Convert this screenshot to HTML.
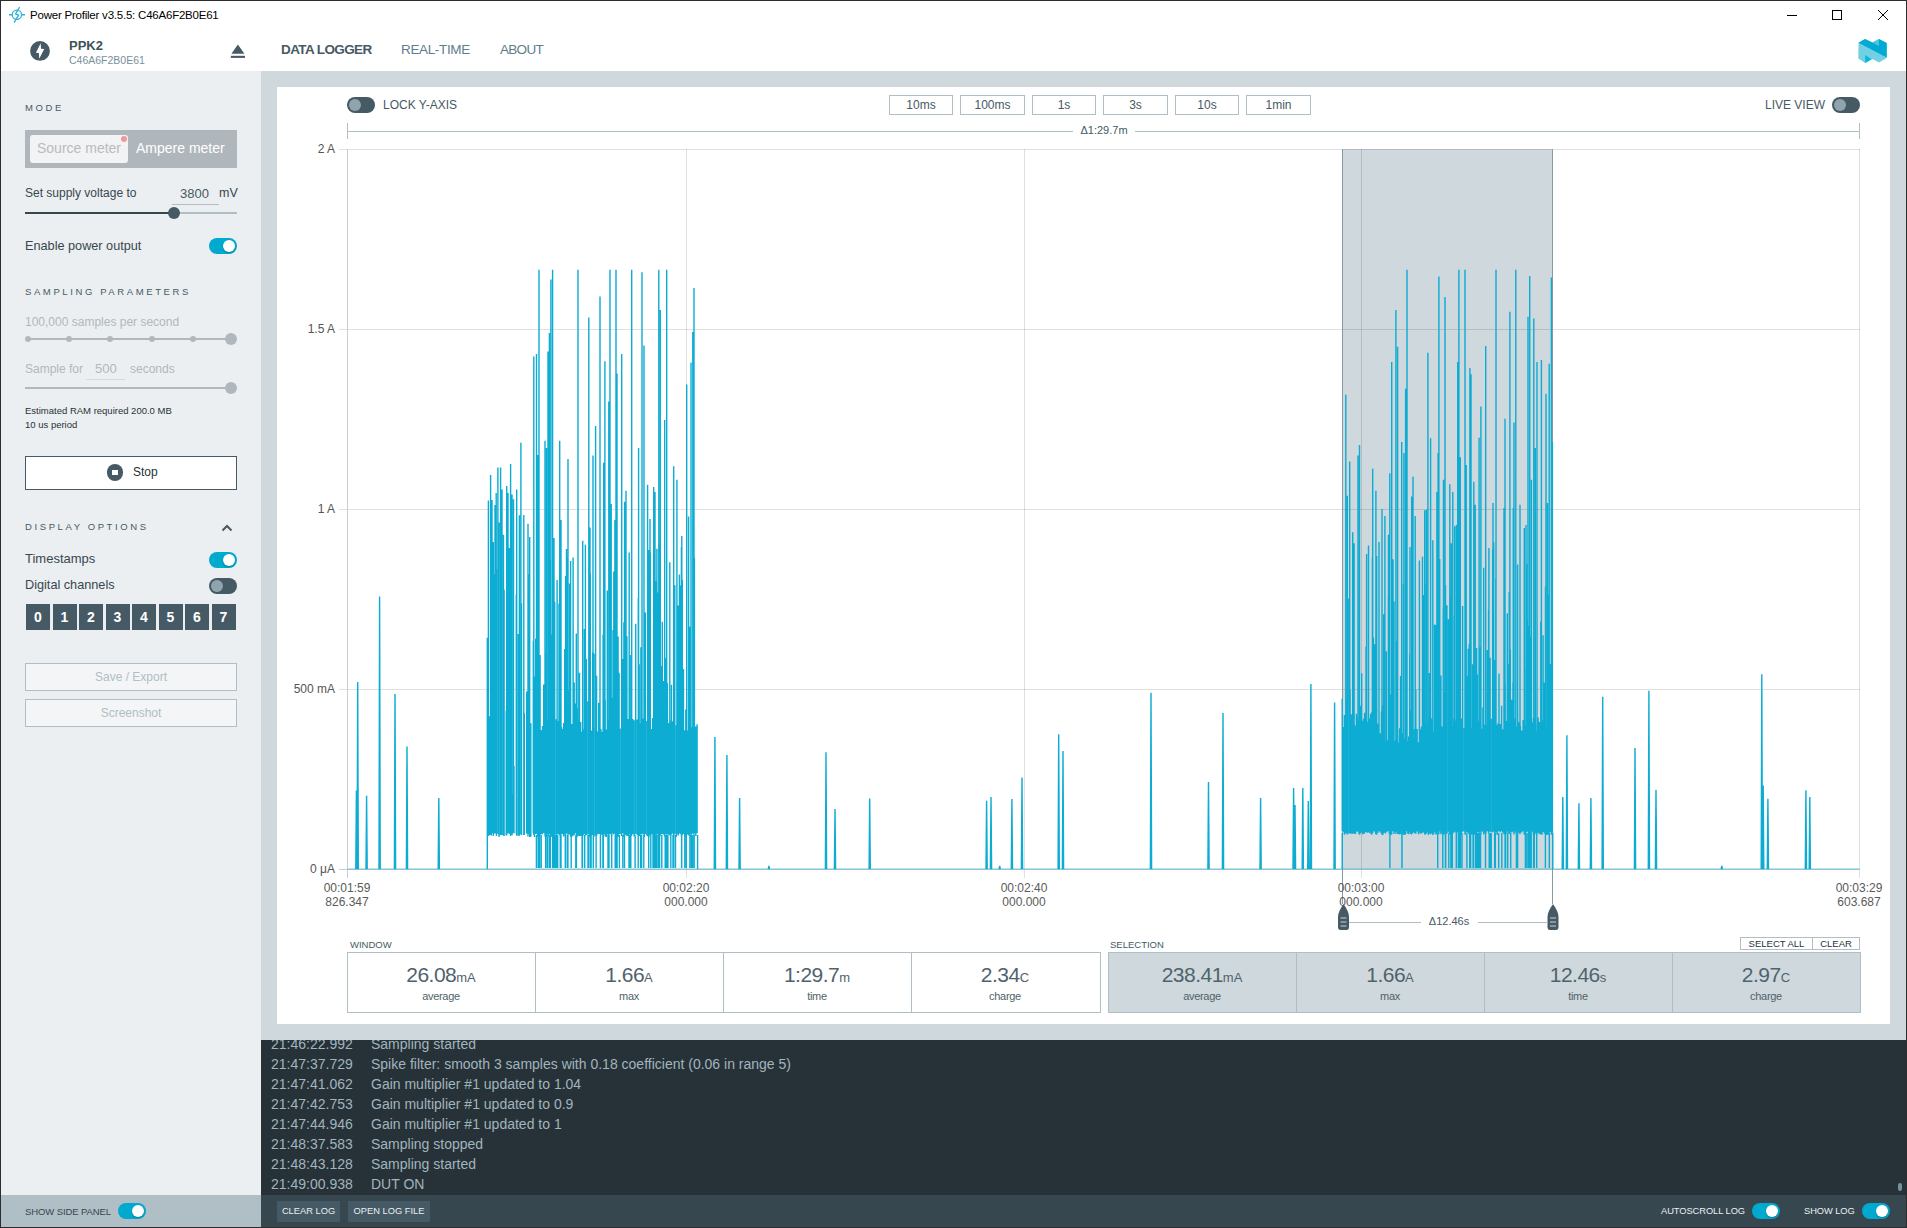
<!DOCTYPE html>
<html><head><meta charset="utf-8">
<style>
*{box-sizing:border-box;margin:0;padding:0}
html,body{width:1907px;height:1228px;overflow:hidden;background:#fff;font-family:"Liberation Sans",sans-serif}
.a{position:absolute}
.t{position:absolute;white-space:nowrap;line-height:1}
#win{position:absolute;left:0;top:0;width:1907px;height:1228px;background:#fff;overflow:hidden}
.bl{position:absolute;background:#2d2d2d}
.side{position:absolute;left:1px;top:71px;width:260px;height:1124px;background:#eceff1}
.main{position:absolute;left:261px;top:71px;width:1645px;height:969px;background:#cfd8dc}
.panel{position:absolute;left:277px;top:87px;width:1613px;height:937px;background:#fff}
.log{position:absolute;left:261px;top:1040px;width:1645px;height:155px;background:#263238;overflow:hidden}
.bbar1{position:absolute;left:1px;top:1195px;width:260px;height:32px;background:#b0bec5}
.bbar2{position:absolute;left:261px;top:1195px;width:1645px;height:32px;background:#37474f}
.hdr{color:#455a64;font-size:9.5px;letter-spacing:2.6px}
.lbl{color:#37474f;font-size:13px}
.tog{position:absolute;width:28px;height:16px;border-radius:8px}
.tog.on{background:#00a9ce}
.tog.off{background:#455a64}
.tog .k{position:absolute;top:2px;width:12px;height:12px;border-radius:6px}
.tog.on .k{right:2px;background:#fff;box-shadow:0 1px 1.5px rgba(0,0,0,0.25)}
.tog.off .k{left:2px;background:#90a4ae}
.ch{position:absolute;top:604px;width:24px;height:26px;background:#455a64;color:#fff;font-weight:bold;font-size:14px;text-align:center;line-height:26px}
.btn2{position:absolute;left:25px;width:212px;height:28px;border:1px solid #b0bec5;background:#f3f5f6;color:#b0bec5;font-size:12px;text-align:center;line-height:26px}
.tb{position:absolute;top:95px;height:20px;border:1px solid #b0bec5;color:#455a64;font-size:12px;text-align:center;line-height:18px}
.yl{position:absolute;right:1572px;color:#555;font-size:12px;line-height:1;white-space:nowrap}
.xl{position:absolute;width:80px;margin-left:-40px;text-align:center;color:#5a5a5a;font-size:12px;line-height:14px}
.cell{position:absolute;top:952px;width:188px;height:61px;text-align:center}
.cell .v{position:absolute;left:0;right:0;top:12px;font-size:21px;color:#4f636c;line-height:1;letter-spacing:-0.5px}
.cell .v small{font-size:13px;letter-spacing:0}
.cell .n{position:absolute;left:0;right:0;top:39px;font-size:11px;color:#4f636c;line-height:1;letter-spacing:-0.3px}
.logrow{position:absolute;left:10px;color:#a2b4bd;font-size:14px;line-height:1;white-space:nowrap}
.logrow span{position:absolute;left:100px}
.bb{position:absolute;top:1201px;height:21px;background:#455a64;color:#eceff1;font-size:9.3px;line-height:21px;text-align:center}
</style></head><body>
<div id="win">
<!-- title bar -->
<svg class="a" style="left:6px;top:4px" width="22" height="22" viewBox="0 0 22 22">
<circle cx="10.9" cy="10.75" r="4.66" fill="none" stroke="#2fb0d6" stroke-width="1.25"/>
<path d="M3 10.75H6.3M15.6 10.75H19" stroke="#2fb0d6" stroke-width="1.3" fill="none"/>
<path d="M13.6 3.05L9.5 9.8L12.6 11.2L8.1 18.6" stroke="#2fb0d6" stroke-width="1.3" fill="none" stroke-linejoin="round"/>
</svg>
<div class="t" style="left:30px;top:10px;font-size:11.5px;color:#000;letter-spacing:-0.22px">Power Profiler v3.5.5: C46A6F2B0E61</div>
<div class="a" style="left:1787px;top:15px;width:10px;height:1px;background:#000"></div>
<div class="a" style="left:1832px;top:10px;width:10px;height:10px;border:1px solid #000"></div>
<svg class="a" style="left:1877px;top:9px" width="12" height="12" viewBox="0 0 12 12"><path d="M1 1L11 11M11 1L1 11" stroke="#000" stroke-width="1"/></svg>

<!-- header -->
<svg class="a" style="left:28px;top:39px" width="24" height="24" viewBox="0 0 24 24">
<circle cx="12" cy="11.9" r="9.9" fill="#455a64"/>
<path d="M12.7 4.2L13 9.8L16.2 10L11.2 19.7L10.9 14.1L7.9 13.7Z" fill="#fff"/>
</svg>
<div class="t" style="left:69px;top:39px;font-size:13px;font-weight:bold;color:#40525b">PPK2</div>
<div class="t" style="left:69px;top:55px;font-size:10.5px;color:#78909c">C46A6F2B0E61</div>
<svg class="a" style="left:230px;top:43px" width="16" height="16" viewBox="0 0 16 16">
<path d="M7.9 1.4L14.4 10.8H1.4Z" fill="#455a64"/><rect x="0.8" y="12.8" width="14.2" height="2.1" fill="#455a64"/>
</svg>
<div class="t" style="left:281px;top:43px;font-size:13.5px;font-weight:bold;color:#455a64;letter-spacing:-0.6px">DATA LOGGER</div>
<div class="t" style="left:401px;top:43px;font-size:13.5px;color:#607d8b;letter-spacing:-0.35px">REAL-TIME</div>
<div class="t" style="left:500px;top:43px;font-size:13.5px;color:#607d8b;letter-spacing:-0.7px">ABOUT</div>
<svg class="a" style="left:1854px;top:36px" width="36" height="30" viewBox="0 0 36 30">
<path d="M4.5 6.8L11 3.05L18.4 6.5L25 3.05L32.7 7.1V22L25 26.6L18.4 23.1L11.2 26.9L4.3 22.5Z" fill="#72cfe4"/>
<path d="M25 3.05L24.9 10L18.4 6.5Z" fill="#4cc6df"/>
<path d="M4.5 6.8L11 3.05L18.4 6.5L24.9 10L25 3.05L32.7 7.1V21.5Z" fill="#00aad2"/>
<path d="M11.2 19.05L11.2 26.9L17.6 23.2Z" fill="#00bcd8"/>
</svg>

<!-- side -->
<div class="side"></div>
<div class="t hdr" style="left:25px;top:103px">MODE</div>
<div class="a" style="left:25px;top:130px;width:212px;height:38px;background:#b0b7bc"></div>
<div class="a" style="left:30px;top:135px;width:98px;height:28px;background:#f2f3f4;border-radius:3px"></div>
<div class="a" style="left:121px;top:136px;width:6px;height:6px;border-radius:3px;background:#ef9a9a"></div>
<div class="t" style="left:37px;top:141px;font-size:14px;color:#b7bcc0">Source meter</div>
<div class="t" style="left:136px;top:141px;font-size:14px;color:#fff">Ampere meter</div>
<div class="t lbl" style="left:25px;top:187px;font-size:12px">Set supply voltage to</div>
<div class="t lbl" style="left:180px;top:187px;font-size:13px;color:#455a64">3800</div>
<div class="a" style="left:172px;top:204px;width:47px;height:1px;background:#b0bec5"></div>
<div class="t lbl" style="left:219px;top:187px;font-size:12.5px">mV</div>
<div class="a" style="left:25px;top:212px;width:212px;height:2px;background:#b0bec5"></div>
<div class="a" style="left:25px;top:212px;width:149px;height:2px;background:#37474f"></div>
<div class="a" style="left:168px;top:207px;width:12px;height:12px;border-radius:6px;background:#455a64"></div>
<div class="t lbl" style="left:25px;top:240px;font-size:12.7px">Enable power output</div>
<div class="tog on" style="left:209px;top:238px"><div class="k"></div></div>

<div class="t hdr" style="left:25px;top:287px">SAMPLING PARAMETERS</div>
<div class="t" style="left:25px;top:316px;font-size:12px;color:#b0b8bd">100,000 samples per second</div>
<div class="a" style="left:28px;top:338px;width:203px;height:2px;background:#b0b8bd"></div>
<div class="a" style="left:25px;top:336px;width:6px;height:6px;border-radius:3px;background:#b0b8bd"></div>
<div class="a" style="left:66px;top:336px;width:6px;height:6px;border-radius:3px;background:#b0b8bd"></div>
<div class="a" style="left:107px;top:336px;width:6px;height:6px;border-radius:3px;background:#b0b8bd"></div>
<div class="a" style="left:149px;top:336px;width:6px;height:6px;border-radius:3px;background:#b0b8bd"></div>
<div class="a" style="left:190px;top:336px;width:6px;height:6px;border-radius:3px;background:#b0b8bd"></div>
<div class="a" style="left:225px;top:333px;width:12px;height:12px;border-radius:6px;background:#b0b8bd"></div>
<div class="t" style="left:25px;top:363px;font-size:12px;color:#b0b8bd">Sample for</div>
<div class="t" style="left:95px;top:362px;font-size:13px;color:#b0b8bd">500</div>
<div class="a" style="left:86px;top:379px;width:39px;height:1px;background:#d5dadd"></div>
<div class="t" style="left:130px;top:363px;font-size:12px;color:#b0b8bd">seconds</div>
<div class="a" style="left:25px;top:387px;width:206px;height:2px;background:#b0b8bd"></div>
<div class="a" style="left:225px;top:382px;width:12px;height:12px;border-radius:6px;background:#b0b8bd"></div>
<div class="t" style="left:25px;top:406px;font-size:9.5px;color:#263238">Estimated RAM required 200.0 MB</div>
<div class="t" style="left:25px;top:420px;font-size:9.5px;color:#263238">10 us period</div>
<div class="a" style="left:25px;top:456px;width:212px;height:34px;border:1px solid #455a64;background:#fff"></div>
<div class="a" style="left:106.5px;top:464px;width:16.5px;height:16.5px;border-radius:8.25px;background:#455a64"></div>
<div class="a" style="left:112px;top:470px;width:6px;height:5px;background:#fff"></div>
<div class="t" style="left:133px;top:466px;font-size:12px;color:#263238">Stop</div>

<div class="t hdr" style="left:25px;top:522px">DISPLAY OPTIONS</div>
<svg class="a" style="left:221px;top:523px" width="12" height="9" viewBox="0 0 12 9"><path d="M1.5 7.5L6 3L10.5 7.5" fill="none" stroke="#455a64" stroke-width="2"/></svg>
<div class="t lbl" style="left:25px;top:552px">Timestamps</div>
<div class="tog on" style="left:209px;top:552px"><div class="k"></div></div>
<div class="t lbl" style="left:25px;top:579px;font-size:12.7px">Digital channels</div>
<div class="tog off" style="left:209px;top:578px"><div class="k"></div></div>
<div class="ch" style="left:26px">0</div>
<div class="ch" style="left:52.5px">1</div>
<div class="ch" style="left:79px">2</div>
<div class="ch" style="left:105.5px">3</div>
<div class="ch" style="left:132px">4</div>
<div class="ch" style="left:158.5px">5</div>
<div class="ch" style="left:185px">6</div>
<div class="ch" style="left:211.5px">7</div>
<div class="btn2" style="top:663px">Save / Export</div>
<div class="btn2" style="top:699px">Screenshot</div>

<!-- main -->
<div class="main"></div>
<div class="panel"></div>
<svg class="a" style="left:0;top:0" width="1907" height="1228" viewBox="0 0 1907 1228">
<rect x="1342.5" y="149" width="210.5" height="720.5" fill="#cfd8dc"/>
<path d="M339 149.5 H1860" stroke="rgba(0,0,0,0.12)" stroke-width="1"/>
<path d="M339 329.5 H1860" stroke="rgba(0,0,0,0.12)" stroke-width="1"/>
<path d="M339 509.5 H1860" stroke="rgba(0,0,0,0.12)" stroke-width="1"/>
<path d="M339 689.5 H1860" stroke="rgba(0,0,0,0.12)" stroke-width="1"/>
<path d="M686.5 149 V878" stroke="rgba(0,0,0,0.12)" stroke-width="1"/>
<path d="M1024.5 149 V878" stroke="rgba(0,0,0,0.12)" stroke-width="1"/>
<path d="M1361.5 149 V878" stroke="rgba(0,0,0,0.12)" stroke-width="1"/>
<path d="M1859.5 149 V878" stroke="rgba(0,0,0,0.12)" stroke-width="1"/>
<path d="M339 869.5 H1860" stroke="#cccccc" stroke-width="1"/>
<path d="M347.5 149 V878" stroke="#cccccc" stroke-width="1"/>
<path d="M1342.5 149 V904 M1552.5 149 V904" stroke="#8a9aa2" stroke-width="1"/>
<g fill="none" stroke="#0cacd3" stroke-width="1.4" stroke-linejoin="miter">
<path d="M355.8 869 L356.4 790.6 L357 869 M357.1 869 L357.7 682 L358.3 869 M366 869 L366.6 795.8 L367.2 869 M379 869 L379.6 596.5 L380.2 869 M394.4 869 L395 694 L395.6 869 M406.4 869 L407 746.6 L407.6 869 M438.2 869 L438.8 798 L439.4 869 M714.3 869 L714.9 737 L715.5 869 M726.3 869 L726.9 755 L727.5 869 M739 869 L739.6 798 L740.2 869 M768.3 869 L768.9 866 L769.5 869 M825.4 869 L826 752.3 L826.6 869 M834.4 869 L835 809 L835.6 869 M869.1 869 L869.7 798.4 L870.3 869 M986 869 L986.6 800.7 L987.2 869 M990.4 869 L991 797 L991.6 869 M999.1 869 L999.7 866 L1000.3 869 M1011.3 869 L1011.9 799 L1012.5 869 M1021.4 869 L1022 777.5 L1022.6 869 M1058.1 869 L1058.7 734.3 L1059.3 869 M1062.4 869 L1063 751 L1063.6 869 M1150.4 869 L1151 692.7 L1151.6 869 M1207.9 869 L1208.5 782 L1209.1 869 M1222.4 869 L1223 713 L1223.6 869 M1260 869 L1260.6 798 L1261.2 869 M1293 869 L1293.6 788 L1294.2 869 M1294.4 869 L1295 805 L1295.6 869 M1302.2 869 L1302.8 788 L1303.4 869 M1307.7 869 L1308.3 801 L1308.9 869 M1310.3 869 L1310.9 683.9 L1311.5 869 M1334 869 L1334.6 702.6 L1335.2 869 M1562.2 869 L1562.8 797 L1563.4 869 M1566.3 869 L1566.9 735.2 L1567.5 869 M1578.3 869 L1578.9 803.3 L1579.5 869 M1590.3 869 L1590.9 798 L1591.5 869 M1602.1 869 L1602.7 696.7 L1603.3 869 M1634.4 869 L1635 748 L1635.6 869 M1648.3 869 L1648.9 690.8 L1649.5 869 M1655.4 869 L1656 790 L1656.6 869 M1721.2 869 L1721.8 866 L1722.4 869 M1761.2 869 L1761.8 674.3 L1762.4 869 M1762.6 869 L1763.2 785.4 L1763.8 869 M1767.3 869 L1767.9 798.8 L1768.5 869 M1805.3 869 L1805.9 790.2 L1806.5 869 M1809.2 869 L1809.8 797 L1810.4 869"/>
<path d="M347.5 869 H1859.5" stroke-width="1" stroke="rgba(12,172,211,0.6)"/>
<path d="M487.3 869 V835 M487.3 836.2 V637.7 M488.4 836 V500.5 M489.4 835 V716.2 M490.6 835.1 V474.9 M491.3 835.6 V688.6 M492 833.3 V500 M493.3 835.9 V542 M493.7 834 V573.9 M495 833.3 V505 M496.2 834.1 V493 M496.4 835.9 V569 M497.9 833.8 V467.6 M498.9 836 V576.8 M499.1 836.9 V522.5 M500.6 835 V467.6 M500.9 834.5 V661.9 M502 834.9 V489.5 M503.5 835.7 V534.7 M504.1 836.1 V589.7 M506.2 835.5 V710.6 M506.7 835.6 V485.9 M508 833.3 V493 M509.4 833.6 V548 M509.7 834 V698.5 M510.6 836 V464 M512 834.2 V494.4 M512.1 835.3 V794.3 M513.5 833 V499.3 M514 833.2 V766 M516.3 834.1 V594.6 M516.7 835.7 V489.5 M518.3 835.8 V634 M519.4 835.7 V515.2 M520.9 834.2 V442.7 M521.5 835.1 V603.4 M523.8 834.9 V515 M524.3 834.9 V713.3 M526.7 833.5 V691.5 M528 836.6 V523.7 M528.6 833.8 V574.3 M529.7 836.9 V537 M530.8 836.7 V723.3 M533.3 833.1 V640.7 M533.8 834.8 V356.5 M534.4 836.9 V676.6 M535.7 834.1 V638.8 M536.4 835 V868 M536.5 833.8 V354 M536.9 833.6 V727.9 M537.7 836.8 V455 M538.2 835 V868 M537.9 835 V718.8 M539 835.8 V719.3 M539.6 835 V868 M539 834.9 V269.8 M538.2 835 V868 M540.1 835 V654.9 M541.4 834.2 V730.1 M541.2 835 V868 M542.5 834.3 V725.9 M543.7 833 V684.5 M545 836.4 V440.7 M545.7 835 V868 M545.1 835.9 V654.2 M546 834.2 V726.7 M545.8 835 V868 M546.5 837 V448 M547.5 834.4 V721.3 M548 834.1 V351.6 M547.4 835 V868 M548.5 836.3 V717.3 M549.2 835 V868 M549.4 834 V333 M549.4 835 V868 M549.7 833.8 V560.1 M550.4 835 V868 M550.5 836.5 V718.9 M550.9 835.5 V279.5 M551.5 836.8 V689.9 M552.3 835.9 V634.5 M552.7 835 V868 M552.6 834.8 V269.8 M553.7 835.6 V730 M553 835 V868 M554 836.7 V538 M554 835 V868 M554.7 834.4 V601.7 M555.1 835 V868 M556.2 836.9 V719.3 M556.4 835 V868 M557.1 834.2 V580.1 M558.2 834.6 V720.9 M557.7 835 V868 M559 833.8 V603.5 M559.7 835 V440.7 M560.4 835 V868 M560.2 837 V727.4 M561 833.6 V520 M560.3 835 V868 M561.4 834.4 V727.1 M561 835 V868 M562.2 834 V728.7 M563.6 836.5 V722.9 M564.7 834.7 V649.1 M565.6 835.1 V575.9 M565.3 835 V868 M566.5 833.2 V549 M567.2 835 V868 M567.3 833.5 V557.5 M568 835.5 V459 M568.3 833.9 V690.4 M567.9 835 V868 M569.6 834.6 V583.4 M570.6 836.8 V561.1 M572 836.5 V724 M571.2 835 V868 M573.1 835.8 V557.6 M574.2 834.9 V682.6 M575.1 833 V703.6 M575.8 835 V868 M576.3 836.3 V633.4 M577.1 836.9 V708.3 M576.4 835 V868 M578 833.6 V269.8 M578.5 835.7 V720.9 M579.5 835.9 V672.8 M580.7 836.1 V721.9 M581.7 835.2 V731.8 M582.1 835 V868 M582.7 833.9 V540.8 M583.1 835.6 V729.3 M582.5 835 V868 M584.4 834 V629 M585.4 835.8 V544.8 M584.7 835 V868 M586.4 835.1 V659.1 M587.9 834.6 V701.2 M588 835 V868 M588.8 833 V317.4 M588.7 835 V868 M589.4 836.8 V722.5 M590 836.5 V527.4 M590.3 833.9 V573.8 M591.1 835 V868 M591.3 835.8 V730.5 M590.5 835 V868 M592.7 835 V652.3 M593 834.7 V455.4 M593.3 835 V868 M594 836.7 V653.6 M593.3 835 V868 M595.5 834.4 V728.3 M595.6 835.7 V426 M596.1 835 V868 M596.6 836 V675.7 M597.6 833.8 V731.6 M598.7 834.2 V702.8 M600 833.9 V296.6 M600.4 835 V868 M600 834.2 V561.9 M600.9 835 V729.1 M600.5 835 V868 M601.8 834.7 V731.7 M603.1 836.8 V634.4 M602.9 835 V868 M603.7 833.9 V462.7 M604 833.6 V707 M603.3 835 V868 M604.9 834.6 V361.3 M605.2 836.5 V700.6 M606.3 837 V729.4 M607.3 834.3 V590.4 M608 835 V868 M608.2 836 V720.9 M608.5 835 V868 M608.8 834.5 V401.6 M608.5 835 V868 M609.3 833.7 V696.5 M609 835 V868 M610 834.4 V269.8 M610.4 833.5 V640.3 M611.2 833.8 V504 M611.7 835 V868 M611.8 836.3 V697.8 M613 833.2 V630 M613.8 834.5 V571.5 M614.6 833.8 V719.6 M615.2 835 V868 M614.9 833.1 V520 M615.7 836.2 V725.3 M616 833.2 V269.8 M615.3 835 V868 M616.7 836.7 V635.5 M617.1 835 V868 M617 836.6 V373.6 M616.6 835 V868 M618.1 836.8 V636.4 M619.1 834 V672.8 M620.2 834.3 V728.4 M619.4 835 V868 M621.7 836 V645.4 M621.7 835.5 V354 M622.8 833.1 V659.1 M622.8 835 V868 M623.9 836.8 V622.2 M624.6 834.5 V501.8 M624.5 835 V868 M625.4 835 V730.1 M626 833.7 V490.8 M626.9 836 V636.2 M628.3 836.1 V719.1 M629.2 834.3 V552.5 M629 835 V868 M630.2 836.1 V655.1 M629.7 835 V868 M631.5 836 V719.3 M630.8 835 V868 M631.7 833.1 V269.8 M632.8 834.3 V719.1 M634.2 836.5 V720.3 M635.7 834.1 V623.8 M635.1 835 V868 M637.2 835 V719.4 M638.3 834.8 V598.3 M638.2 835 V868 M638.6 835.5 V448 M639.2 836 V664.2 M640 835.7 V723.6 M640.6 835 V868 M640.9 834.2 V647.3 M642 834.5 V272.2 M642 833.8 V709.4 M641.6 835 V868 M643.4 833.6 V718.6 M644 835.3 V345.5 M643.8 835 V868 M644.4 837 V674 M645.3 833.9 V612.6 M646.8 835.6 V720.9 M647.6 833.4 V484.7 M647.7 836.3 V725.6 M649 836.7 V549.9 M648.7 835 V868 M650 833.5 V518.9 M650.8 835 V868 M650.3 835.3 V552.5 M651.7 834.5 V729 M652.6 834.8 V718 M653 835 V868 M653.7 836.8 V487 M653.9 835 V868 M654 835.5 V598.3 M653.8 835 V868 M655 833.6 V492 M654.6 835 V868 M655.2 835.4 V721 M656.1 833.8 V581 M655.8 835 V868 M656.9 835.7 V548.7 M656.6 835 V868 M657.9 833.8 V592.5 M658.8 835.2 V269.8 M658.2 835 V868 M659.2 834.6 V626 M660.1 835.6 V543.1 M659.6 835 V868 M660.3 835.8 V310 M661.1 834.1 V666.1 M661.8 835 V868 M662.3 834.2 V621.7 M663.7 834.4 V680.9 M664.7 836.5 V420 M664.9 834.5 V683.6 M665.2 835 V868 M665.9 833.8 V658.3 M666.6 835 V868 M666.7 834.7 V269.8 M667.4 834.6 V683.2 M668.7 834.8 V723.1 M667.9 835 V868 M669.8 835.2 V562.3 M670.6 836.6 V720.8 M670.8 835 V868 M671.5 834.5 V684.7 M672.9 833.6 V721.2 M673 835 V868 M673.7 836.7 V466.3 M673.7 835 V868 M673.9 836.2 V619 M674.8 833.8 V585.3 M675.5 835 V868 M676.3 836.9 V725.2 M676.9 833.2 V479.8 M677.2 834.6 V721.6 M678.3 835.5 V605.6 M679.4 833.6 V574.6 M680.6 833.9 V585.4 M681.4 836.4 V547.2 M681.8 833.7 V536 M681.6 835 V868 M682.3 835.1 V580 M681.7 835 V868 M683.5 834 V669.1 M684.7 836.6 V730.2 M684.8 835 V868 M685.8 836 V709.4 M686.3 835 V868 M686.7 833.5 V384.5 M686.7 835.2 V726.6 M687.5 834.2 V730.4 M688.6 835.3 V516.4 M688.8 835.6 V729.2 M689.7 834.8 V626.8 M689.9 835 V868 M691 835 V362.6 M691.4 835 V868 M691.1 836.1 V729.4 M692.3 833.7 V727.2 M692.8 833.4 V332 M692.7 835 V868 M693.6 833.4 V545.4 M694 835 V288 M694.2 835 V868 M694.4 833.3 V558 M695.8 836.1 V726.4 M697.1 833.2 V724.3 M697.6 835 V869"/>
<path d="M1342.2 869 V833 M1342.2 831 V698.8 M1343.1 831.8 V726.9 M1344.4 834.7 V714.9 M1345.8 833.4 V394.8 M1345.9 833.6 V699.8 M1347.3 834.2 V495.7 M1347.3 834.6 V671.7 M1348.8 833.4 V598.6 M1349.7 833.5 V461.5 M1350.1 833.5 V689.7 M1351.1 833.8 V714.2 M1352.3 833.4 V715.1 M1352.7 833.7 V532.3 M1353.2 831.9 V593.3 M1354.1 833.7 V566.9 M1354.1 832.8 V543.3 M1355.5 834.1 V725.4 M1356.4 831.4 V713.7 M1357.6 831.7 V717.4 M1358 831.1 V455.4 M1359 834.1 V720.7 M1359.5 834.7 V445 M1360.4 833.6 V705.8 M1361.7 832.5 V673.2 M1362.7 834.3 V720.7 M1363.7 834.1 V718.6 M1364.6 833.2 V712.7 M1366 832 V646.8 M1366.6 832.2 V554 M1367.5 832.7 V722 M1368.5 832.3 V545.6 M1369.4 832.7 V718.5 M1370.6 833.6 V714 M1371.6 834.7 V712.3 M1372.4 831.2 V557.8 M1372.7 833.3 V468.8 M1373.4 831.2 V637.5 M1374.6 831.5 V644.2 M1375.7 834.2 V696.4 M1375.9 833.3 V490.8 M1376.7 834.7 V556 M1378 832.8 V723.7 M1379 831.1 V541.9 M1380.3 832.5 V733.3 M1381.5 833.4 V711.5 M1382 834.8 V509 M1382.9 834.9 V705.3 M1383.7 832.9 V614.3 M1384.7 832.6 V682.5 M1384.9 831.4 V516 M1385.5 833.6 V742.1 M1386.4 831.8 V651.3 M1387.5 831.6 V740.2 M1388.4 831.1 V594.9 M1388.5 831 V534.7 M1389.3 833.7 V739.7 M1389.8 831.5 V473.2 M1390.6 834.9 V694.5 M1389.9 833 V868 M1391.7 834.5 V362 M1391.9 831.5 V675.7 M1393 831.1 V559.3 M1394 833.9 V601.4 M1395.3 832 V740.7 M1395.9 833.9 V310 M1396.6 831.7 V641.3 M1397.6 831.2 V346.7 M1397.7 834.1 V735.8 M1398.7 833.9 V742.5 M1399.6 834.4 V728.2 M1400.6 833.9 V676.1 M1401.7 831.3 V442 M1401.9 833 V868 M1402.1 833.8 V732.9 M1402 833 V868 M1403.5 834.7 V583.8 M1403.9 832 V453 M1404.9 834.9 V738.4 M1405.6 833.9 V388.7 M1406.2 831 V735 M1407 831.1 V269.8 M1407.6 833.6 V740.9 M1408.7 834.3 V736.6 M1409.7 831.3 V653.9 M1410 832.2 V547 M1410.6 833.9 V730.2 M1411.4 831.7 V710 M1411.7 834.4 V496.4 M1412.4 832.9 V545.3 M1413 831.2 V476.8 M1413.3 832.5 V737.5 M1414.5 833.3 V729 M1415.2 832.8 V516 M1415.8 833.7 V689.6 M1417.1 831.6 V729 M1418.5 834.2 V742.2 M1419.4 832.5 V560.5 M1420.2 833.6 V729.2 M1421.5 833.5 V726.5 M1422.5 832.7 V556.8 M1423.8 832.5 V594.9 M1424.7 834.1 V510.3 M1424.9 834.8 V584.2 M1425.9 834.1 V722.5 M1426.4 833.3 V509.6 M1426.9 832.2 V724.6 M1427.9 831.2 V352.8 M1428.3 834.9 V717.5 M1429.4 833.8 V673 M1430.5 834.3 V725.1 M1430.6 832.3 V438.3 M1431.4 833.4 V718.4 M1432.8 834.9 V540.2 M1433.7 834.3 V731.7 M1434.5 832.2 V624.5 M1435.9 834.6 V625.1 M1436.9 833.7 V492 M1436.9 834.6 V720.9 M1438.1 832.1 V453 M1437.7 833 V868 M1438.4 832.7 V576.9 M1438.9 834.3 V276.6 M1439.7 831.2 V558.9 M1440.9 834.2 V675.5 M1442.2 833.3 V726.4 M1442.8 833 V868 M1443.3 834.2 V607.9 M1443.5 834.7 V479.8 M1444.7 831.3 V692.8 M1445 834.2 V297 M1445.4 833 V868 M1445.5 834.7 V585.3 M1445.7 833 V868 M1446.9 833.7 V605.2 M1448.4 831.8 V619.3 M1448.8 833 V868 M1449.5 834.2 V728.3 M1449.8 831.4 V484.2 M1450.8 834.1 V596.2 M1450.9 833 V868 M1451.3 834.6 V543.3 M1451.7 833.1 V726.9 M1452.8 833.4 V492 M1452.3 833 V868 M1453 831.7 V615.5 M1454.4 832.5 V718.9 M1454.7 832.6 V526.2 M1455.5 831.6 V720.6 M1456.3 833 V868 M1456.4 832.5 V525 M1456.6 833 V868 M1456.4 834.1 V660.9 M1456.6 833 V868 M1457.7 832.4 V362 M1457.8 831.1 V566.8 M1458.6 833 V868 M1458.8 834.5 V629.8 M1458.9 833.3 V269.8 M1459.3 833 V868 M1459.7 832.7 V572.6 M1460.3 834.1 V457.3 M1461.2 834.9 V718.5 M1460.4 833 V868 M1462.6 831.8 V606.1 M1462 833 V868 M1464.1 831.2 V728 M1465 834.5 V269.8 M1465.2 834.8 V649.7 M1466.1 831.3 V606.8 M1466.2 832.6 V465 M1466.9 833 V868 M1466.9 832 V676.1 M1468.2 833.6 V648.8 M1469.3 833.7 V643.8 M1469.9 832.8 V368 M1470.6 833 V868 M1470.4 835 V730.6 M1469.7 833 V868 M1471 832 V374.3 M1471.5 834.6 V728.2 M1472.6 834.3 V664.2 M1473.1 833 V868 M1473.8 833.8 V481.7 M1474 834.9 V727.5 M1473.5 833 V868 M1475.2 834 V504.7 M1475.4 833.7 V726.6 M1475.6 833 V868 M1476.6 834 V648.1 M1476.3 833 V868 M1477.4 832 V674.6 M1477.4 833 V868 M1478.7 831.7 V720.8 M1478.2 833 V868 M1479.1 833.7 V437.8 M1479.4 833 V868 M1479.8 831.8 V646.9 M1480.5 833 V868 M1480.9 831.9 V406.5 M1480.9 834.5 V731 M1481.8 831.6 V728.7 M1482.9 831.4 V707.6 M1483.7 834.4 V567.7 M1485.1 832.8 V724.8 M1485.7 834.3 V346 M1485.9 833.5 V725.1 M1485.5 833 V868 M1487.3 831.2 V650 M1488.6 833.2 V610.6 M1489.2 833 V868 M1488.9 832.1 V548 M1490.1 831.6 V657.7 M1490.6 833 V868 M1491.2 832.3 V718.8 M1491.2 833 V868 M1492.7 832.3 V549.7 M1493 831.5 V503 M1493.7 831.2 V542.3 M1494.7 833.7 V660.1 M1494.7 833 V868 M1495.8 832.1 V578.6 M1495.3 833 V868 M1496 832.5 V269.8 M1497.1 835 V724.9 M1498.1 831.4 V722.9 M1498.7 833 V868 M1499 831.2 V673.6 M1500.4 832.2 V724 M1501.6 831.1 V705.8 M1502.6 832.4 V729.3 M1501.8 833 V868 M1504 834.3 V590.6 M1504 831.7 V507.9 M1505 834.6 V418.7 M1505.1 833 V868 M1505.2 831.6 V683.4 M1505.6 833 V868 M1506.2 833.8 V721 M1505.5 833 V868 M1507.3 831.3 V613.3 M1508.2 833 V664.1 M1507.7 833 V868 M1509.2 833.4 V591.9 M1509.9 834.2 V311.8 M1510.3 831.8 V649.6 M1510.7 833 V868 M1511.6 832.6 V699.7 M1513 831.2 V682.4 M1513.3 832.3 V507.9 M1514 834.5 V422.4 M1514.4 831.1 V719.1 M1515.8 832.9 V269.8 M1515.8 832.1 V717.2 M1516.4 833 V868 M1516.6 832.5 V726.8 M1516.4 833 V868 M1517.6 833.4 V564.5 M1517.6 833 V868 M1518.6 832.8 V722.2 M1519.5 831.5 V728.9 M1520 834.3 V504.7 M1520.4 832.3 V726.1 M1521.7 832.5 V730.4 M1523.1 831.2 V720 M1524.3 834.8 V528 M1524.4 833.1 V667.6 M1525.5 833.1 V725.3 M1526.2 833 V868 M1526 831.9 V525 M1525.4 833 V868 M1526.5 832 V564 M1527.6 831.1 V620.3 M1527.9 833 V868 M1528 831.8 V316.7 M1528.2 833 V868 M1528.5 833.3 V625.7 M1529.7 833.8 V717.1 M1530.3 833 V868 M1529.7 833.9 V275.9 M1529.1 833 V868 M1531.1 833 V636.8 M1531.4 832.1 V479.8 M1531.2 833 V868 M1532.3 831.5 V722.6 M1533.4 834.4 V718.1 M1533.6 833 V868 M1533.8 834 V318.6 M1534.3 833 V868 M1534.7 834.8 V717.4 M1535.3 832.7 V448 M1535.9 833.1 V731 M1536.9 834.8 V724.7 M1537 832.4 V362 M1536.7 833 V868 M1538.1 832.7 V717.5 M1539.4 834.2 V722.1 M1540.8 834.3 V621.6 M1541.4 831.2 V360 M1542 834.8 V720.2 M1543.1 832 V635.3 M1544.4 833.5 V682.4 M1545.5 833.1 V586.7 M1545.4 833 V868 M1546 833 V393.8 M1545.4 833 V868 M1546.7 834.9 V726.8 M1547.5 834.7 V503 M1548 834.2 V594.5 M1549 834.5 V726.5 M1549.3 833 V868 M1549.2 832.1 V363.8 M1550.4 832.1 V664.3 M1551.4 834.7 V277.6 M1551.8 832 V548.5 M1552.4 832.7 V442 M1552.8 833 V869"/>
</g>
<path d="M347.5 123 V139 M1859.5 123 V139 M348 131.5 H1073 M1135 131.5 H1859" stroke="#b0bec5" stroke-width="1"/>
<path d="M1343.5 904 C1340.5 908 1338 913 1338 917 V927 Q1338 930 1340.5 930 H1346.5 Q1349 930 1349 927 V917 C1349 913 1346.5 908 1343.5 904Z" fill="#455a64"/>
<rect x="1340.5" y="917.4" width="6" height="1.2" fill="#b0bec5"/>
<rect x="1340.5" y="921.4" width="6" height="1.2" fill="#b0bec5"/>
<rect x="1340.5" y="925.4" width="6" height="1.2" fill="#b0bec5"/>
<path d="M1553 904 C1550 908 1547.5 913 1547.5 917 V927 Q1547.5 930 1550 930 H1556 Q1558.5 930 1558.5 927 V917 C1558.5 913 1556 908 1553 904Z" fill="#455a64"/>
<rect x="1550" y="917.4" width="6" height="1.2" fill="#b0bec5"/>
<rect x="1550" y="921.4" width="6" height="1.2" fill="#b0bec5"/>
<rect x="1550" y="925.4" width="6" height="1.2" fill="#b0bec5"/>
<path d="M1349 922.5 H1421 M1478 922.5 H1548" stroke="#b0bec5" stroke-width="1"/>
</svg>
<div class="tog off" style="left:347px;top:97px"><div class="k"></div></div>
<div class="t" style="left:383px;top:99px;font-size:12px;color:#455a64">LOCK Y-AXIS</div>
<div class="tb" style="left:889px;width:64px">10ms</div>
<div class="tb" style="left:960px;width:65px">100ms</div>
<div class="tb" style="left:1032px;width:64px">1s</div>
<div class="tb" style="left:1103px;width:65px">3s</div>
<div class="tb" style="left:1175px;width:64px">10s</div>
<div class="tb" style="left:1246px;width:65px">1min</div>
<div class="t" style="left:1104px;top:125px;font-size:11px;color:#455a64;transform:translateX(-50%)">&Delta;1:29.7m</div>
<div class="t" style="left:1765px;top:99px;font-size:12px;color:#455a64">LIVE VIEW</div>
<div class="tog off" style="left:1832px;top:97px"><div class="k"></div></div>
<div class="yl" style="top:143px">2 A</div>
<div class="yl" style="top:323px">1.5 A</div>
<div class="yl" style="top:503px">1 A</div>
<div class="yl" style="top:683px">500 mA</div>
<div class="yl" style="top:863px">0 &mu;A</div>
<div class="xl" style="left:347px;top:881px">00:01:59<br>826.347</div>
<div class="xl" style="left:686px;top:881px">00:02:20<br>000.000</div>
<div class="xl" style="left:1024px;top:881px">00:02:40<br>000.000</div>
<div class="xl" style="left:1361px;top:881px">00:03:00<br>000.000</div>
<div class="xl" style="left:1859px;top:881px">00:03:29<br>603.687</div>
<div class="t" style="left:1449px;top:916px;font-size:11px;color:#455a64;transform:translateX(-50%)">&Delta;12.46s</div>
<div class="t" style="left:350px;top:940px;font-size:9.5px;color:#455a64">WINDOW</div>
<div class="t" style="left:1110px;top:940px;font-size:9.5px;color:#455a64">SELECTION</div>
<div class="a" style="left:1740px;top:937px;width:73px;height:13px;border:1px solid #b0bec5;font-size:9.5px;color:#263238;text-align:center;line-height:11px">SELECT ALL</div>
<div class="a" style="left:1812px;top:937px;width:48px;height:13px;border:1px solid #b0bec5;font-size:9.5px;color:#263238;text-align:center;line-height:11px">CLEAR</div>
<div class="a" style="left:347px;top:952px;width:754px;height:61px;border:1px solid #b0bec5"></div>
<div class="a" style="left:535px;top:952px;width:1px;height:61px;background:#b0bec5"></div>
<div class="a" style="left:723px;top:952px;width:1px;height:61px;background:#b0bec5"></div>
<div class="a" style="left:911px;top:952px;width:1px;height:61px;background:#b0bec5"></div>
<div class="cell" style="left:347px"><div class="v">26.08<small>mA</small></div><div class="n">average</div></div>
<div class="cell" style="left:535px"><div class="v">1.66<small>A</small></div><div class="n">max</div></div>
<div class="cell" style="left:723px"><div class="v">1:29.7<small>m</small></div><div class="n">time</div></div>
<div class="cell" style="left:911px"><div class="v">2.34<small>C</small></div><div class="n">charge</div></div>
<div class="a" style="left:1108px;top:952px;width:753px;height:61px;border:1px solid #b0bec5;background:#cfd8dc"></div>
<div class="a" style="left:1296px;top:952px;width:1px;height:61px;background:#b0bec5"></div>
<div class="a" style="left:1484px;top:952px;width:1px;height:61px;background:#b0bec5"></div>
<div class="a" style="left:1672px;top:952px;width:1px;height:61px;background:#b0bec5"></div>
<div class="cell" style="left:1108px"><div class="v">238.41<small>mA</small></div><div class="n">average</div></div>
<div class="cell" style="left:1296px"><div class="v">1.66<small>A</small></div><div class="n">max</div></div>
<div class="cell" style="left:1484px"><div class="v">12.46<small>s</small></div><div class="n">time</div></div>
<div class="cell" style="left:1672px"><div class="v">2.97<small>C</small></div><div class="n">charge</div></div>


<!-- log -->
<div class="log">
<div class="logrow" style="top:-3px">21:46:22.992<span>Sampling started</span></div>
<div class="logrow" style="top:17px">21:47:37.729<span>Spike filter: smooth 3 samples with 0.18 coefficient (0.06 in range 5)</span></div>
<div class="logrow" style="top:37px">21:47:41.062<span>Gain multiplier #1 updated to 1.04</span></div>
<div class="logrow" style="top:57px">21:47:42.753<span>Gain multiplier #1 updated to 0.9</span></div>
<div class="logrow" style="top:77px">21:47:44.946<span>Gain multiplier #1 updated to 1</span></div>
<div class="logrow" style="top:97px">21:48:37.583<span>Sampling stopped</span></div>
<div class="logrow" style="top:117px">21:48:43.128<span>Sampling started</span></div>
<div class="logrow" style="top:137px">21:49:00.938<span>DUT ON</span></div>
<div class="a" style="left:1637px;top:143px;width:4px;height:8px;border-radius:2px;background:#78909c"></div>
</div>
<div class="bbar1"></div>
<div class="bbar2"></div>
<div class="t" style="left:25px;top:1207px;font-size:9.5px;color:#37474f;letter-spacing:-0.1px">SHOW SIDE PANEL</div>
<div class="tog on" style="left:118px;top:1203px"><div class="k"></div></div>
<div class="bb" style="left:277px;width:63px">CLEAR LOG</div>
<div class="bb" style="left:348px;width:82px">OPEN LOG FILE</div>
<div class="t" style="left:1661px;top:1207px;font-size:9.3px;color:#eceff1;letter-spacing:-0.05px">AUTOSCROLL LOG</div>
<div class="tog on" style="left:1752px;top:1203px"><div class="k"></div></div>
<div class="t" style="left:1804px;top:1207px;font-size:9.3px;color:#eceff1;letter-spacing:-0.05px">SHOW LOG</div>
<div class="tog on" style="left:1862px;top:1203px"><div class="k"></div></div>

<!-- window borders -->
<div class="bl" style="left:0;top:0;width:1907px;height:1px"></div>
<div class="bl" style="left:0;top:0;width:1px;height:1228px"></div>
<div class="bl" style="left:1906px;top:0;width:1px;height:1228px"></div>
<div class="bl" style="left:0;top:1227px;width:1907px;height:1px"></div>
</div>
</body></html>
